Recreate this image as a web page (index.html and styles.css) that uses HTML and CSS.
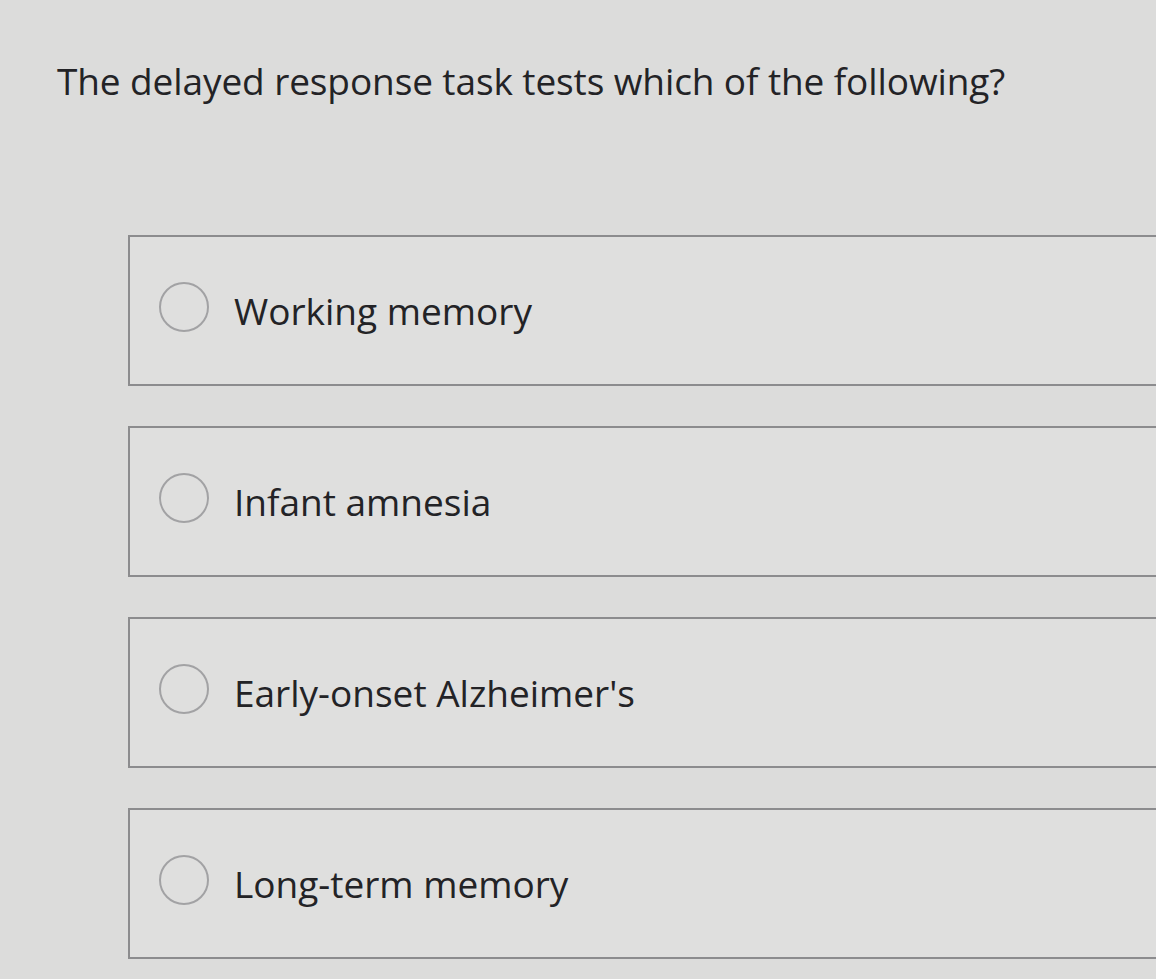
FILE: index.html
```html
<!DOCTYPE html>
<html>
<head>
<meta charset="utf-8">
<link rel="stylesheet" href="styles.css">
</head>
<body>
<div class="page">
  <h1 class="question">The delayed response task tests which of the following?</h1>
  <div class="options">
    <label class="option"><span class="radio"></span><span class="label">Working memory</span></label>
    <label class="option"><span class="radio"></span><span class="label">Infant amnesia</span></label>
    <label class="option"><span class="radio"></span><span class="label">Early-onset Alzheimer's</span></label>
    <label class="option"><span class="radio"></span><span class="label">Long-term memory</span></label>
  </div>
</div>
</body>
</html>
```
FILE: styles.css
```css
html, body {
  margin: 0;
  padding: 0;
  background: #dcdcdb;
  overflow: hidden;
}
.page {
  width: 1156px;
  height: 979px;
  font-family: "Open Sans", "Liberation Sans", sans-serif;
  color: #232326;
  overflow: hidden;
}
.question {
  margin: 0;
  padding: 57px 0 0 57px;
  font-size: 37px;
  font-weight: 500;
  line-height: 48px;
  letter-spacing: -0.1px;
}
.options {
  display: flex;
  flex-direction: column;
  gap: 40px;
  padding: 130px 0 0 128px;
}
.option {
  display: flex;
  align-items: center;
  height: 147px;
  border: 2px solid #8c8c8e;
  border-right: none;
  background: #dfdfde;
  margin-right: -20px;
  padding-left: 29px;
}
.radio {
  width: 46px;
  height: 46px;
  border: 2px solid #a2a2a4;
  border-radius: 50%;
  flex: none;
  margin-right: 25px;
  margin-top: -8px;
}
.label {
  font-size: 37px;
  font-weight: 500;
  line-height: 48px;
  letter-spacing: 0;
}
```
